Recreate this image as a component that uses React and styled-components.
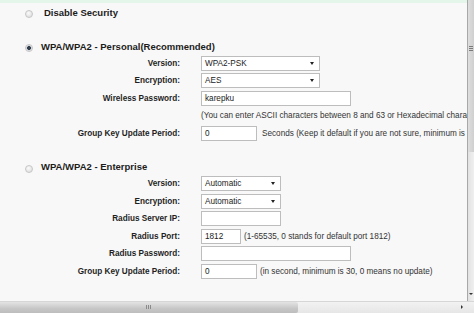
import React from 'react';
import styled, { createGlobalStyle } from 'styled-components';

const GlobalStyle = createGlobalStyle`
  html, body {
    margin: 0;
    padding: 0;
  }
  body {
    width: 474px;
    height: 313px;
    overflow: hidden;
    background: #f8f8f8;
    font-family: "Liberation Sans", Arial, sans-serif;
    color: #222;
  }
`;

const Window = styled.div`
  width: 474px;
  height: 313px;
  display: flex;
  flex-direction: column;
`;

const Body = styled.div`
  flex: 1;
  display: flex;
  min-height: 0;
`;

const Content = styled.div`
  flex: 1;
  min-width: 0;
  overflow: hidden;
  display: flex;
  flex-direction: column;
`;

const TopStrip = styled.div`
  height: 3px;
  flex: none;
  background: #e4f5ea;
`;

const Section = styled.section`
  margin-top: ${(p) => p.$top}px;
`;

const Heading = styled.label`
  display: flex;
  align-items: center;
  height: 14px;
  padding-left: 25px;
  font-size: 9.5px;
  font-weight: bold;
  color: #1c1c1c;
  white-space: nowrap;
`;

const Radio = styled.span`
  flex: none;
  box-sizing: border-box;
  width: 8px;
  height: 8px;
  margin-top: 4px;
  margin-right: ${(p) => p.$gap}px;
  border-radius: 50%;
  border: 1px solid #c6c6c6;
  background: ${(p) =>
    p.$checked
      ? 'radial-gradient(circle, #34404e 0 1.6px, #c9ced4 2.2px, #e6e8ea 3px)'
      : 'radial-gradient(circle at 40% 35%, #fbfbfb, #d8d8d8)'};
`;

const Rows = styled.div`
  margin-top: ${(p) => p.$top}px;
`;

const Row = styled.div`
  display: grid;
  grid-template-columns: 180px 1fr;
  column-gap: 21px;
  height: 17.5px;
  align-items: center;
`;

const Label = styled.div`
  text-align: right;
  font-size: 8.2px;
  font-weight: bold;
  color: #1f1f1f;
  white-space: nowrap;
`;

const Control = styled.div`
  display: flex;
  align-items: center;
  gap: ${(p) => p.$gap ?? 4}px;
  font-size: 8.2px;
  color: #333;
  white-space: nowrap;
`;

const Box = styled.div`
  flex: none;
  box-sizing: border-box;
  width: ${(p) => p.$w}px;
  height: 15px;
  display: flex;
  align-items: center;
  padding: 0 3px;
  border: 1px solid #bdbdbd;
  background: #fff;
  font-size: 8.2px;
  color: #222;
`;

const Arrow = styled.span`
  margin-left: auto;
  margin-right: 2px;
  border-left: 2.5px solid transparent;
  border-right: 2.5px solid transparent;
  border-top: 3px solid #222;
`;

const VScroll = styled.div`
  flex: none;
  width: 7px;
  box-sizing: border-box;
  display: flex;
  flex-direction: column;
  border-left: 1px solid #a8a8a8;
  background: linear-gradient(to right, #e2e2e2, #f0f0f0);
`;

const VThumb = styled.div`
  height: 152px;
  box-sizing: border-box;
  padding-top: 46px;
  display: flex;
  justify-content: center;
  background: linear-gradient(to right, #dedede, #cfcfcf);
`;

const VGrip = styled.div`
  width: 4px;
  height: 6px;
  background: repeating-linear-gradient(to bottom, #7a7a7a 0 1px, transparent 1px 2px);
`;

const DownArrow = styled.div`
  margin-top: auto;
  margin-bottom: 6px;
  align-self: center;
  border-left: 2px solid transparent;
  border-right: 2px solid transparent;
  border-top: 2.5px solid #333;
`;

const HScroll = styled.div`
  flex: none;
  height: 12.5px;
  box-sizing: border-box;
  display: flex;
  align-items: stretch;
  border-top: 1px solid #d6d6d6;
  background: linear-gradient(to bottom, #f2f2f2, #e6e6e6);
`;

const HThumb = styled.div`
  width: 298px;
  display: flex;
  align-items: center;
  justify-content: center;
  border-radius: 0 2px 2px 0;
  background: linear-gradient(to bottom, #e4e4e4, #c6c6c6 60%, #bdbdbd);
`;

const HGrip = styled.div`
  width: 6px;
  height: 4px;
  background: repeating-linear-gradient(to right, #8a8a8a 0 1px, transparent 1px 2px);
`;

const RightArrow = styled.div`
  align-self: center;
  margin-left: auto;
  margin-right: 11px;
  border-top: 2px solid transparent;
  border-bottom: 2px solid transparent;
  border-left: 2.5px solid #333;
`;

const Field = ({ label, children, gap }) => (
  <Row>
    <Label>{label}</Label>
    <Control $gap={gap}>{children}</Control>
  </Row>
);

const Select = ({ w, value }) => (
  <Box $w={w}>
    {value}
    <Arrow />
  </Box>
);

export default function App() {
  return (
    <Window>
      <GlobalStyle />
      <Body>
        <Content>
          <TopStrip />
          <Section $top={2}>
            <Heading>
              <Radio $gap={11} />
              Disable Security
            </Heading>
          </Section>

          <Section $top={20.25}>
            <Heading>
              <Radio $gap={8} $checked />
              WPA/WPA2 - Personal(Recommended)
            </Heading>
            <Rows $top={1}>
              <Field label="Version:">
                <Select w={119} value="WPA2-PSK" />
              </Field>
              <Field label="Encryption:">
                <Select w={119} value="AES" />
              </Field>
              <Field label="Wireless Password:">
                <Box $w={150}>karepku</Box>
              </Field>
              <Field label="">
                (You can enter ASCII characters between 8 and 63 or Hexadecimal characters between 8 and 64.)
              </Field>
              <Field label="Group Key Update Period:" gap={5}>
                <Box $w={56}>0</Box>
                Seconds (Keep it default if you are not sure, minimum is 30, 0 means no update)
              </Field>
            </Rows>
          </Section>

          <Section $top={17.75}>
            <Heading>
              <Radio $gap={8} />
              WPA/WPA2 - Enterprise
            </Heading>
            <Rows $top={1.5}>
              <Field label="Version:">
                <Select w={80} value="Automatic" />
              </Field>
              <Field label="Encryption:">
                <Select w={80} value="Automatic" />
              </Field>
              <Field label="Radius Server IP:">
                <Box $w={80} />
              </Field>
              <Field label="Radius Port:" gap={3}>
                <Box $w={40}>1812</Box>
                (1-65535, 0 stands for default port 1812)
              </Field>
              <Field label="Radius Password:">
                <Box $w={150} />
              </Field>
              <Field label="Group Key Update Period:" gap={3}>
                <Box $w={56}>0</Box>
                (in second, minimum is 30, 0 means no update)
              </Field>
            </Rows>
          </Section>
        </Content>
        <VScroll>
          <VThumb>
            <VGrip />
          </VThumb>
          <DownArrow />
        </VScroll>
      </Body>
      <HScroll>
        <HThumb>
          <HGrip />
        </HThumb>
        <RightArrow />
      </HScroll>
    </Window>
  );
}
